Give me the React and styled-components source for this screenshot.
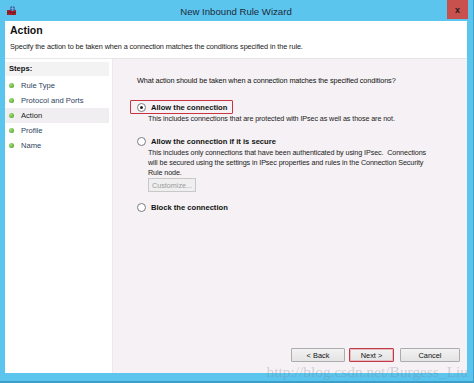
import React from "react";
import styled, { createGlobalStyle } from "styled-components";

const Global = createGlobalStyle`
  html, body { margin: 0; padding: 0; }
  body { font-family: Tahoma, "Liberation Sans", Arial, sans-serif; }
`;

const Window = styled.div`
  position: relative;
  width: 474px;
  height: 383px;
  box-sizing: border-box;
  background: #5cc5ee;
  padding: 0 6px 8px 5px;
  display: flex;
  flex-direction: column;
  border-right: 1px solid #3b9fc9;
  border-bottom: 2px solid #3b9fc9;
  overflow: hidden;
`;

const TitleBar = styled.div`
  height: 21px;
  display: flex;
  align-items: center;
  position: relative;
`;

const Title = styled.div`
  flex: 1;
  text-align: center;
  font-family: "Liberation Sans", Arial, sans-serif;
  font-size: 9.6px;
  color: #1d2a3a;
  padding: 1px 12px 0 0;
`;

const AppIcon = styled.svg`
  width: 11px;
  height: 11px;
  margin-left: 1px;
`;

const CloseBtn = styled.div`
  position: absolute;
  right: -1px;
  top: 0;
  width: 21px;
  height: 19px;
  background: #c9514d;
  display: flex;
  align-items: center;
  justify-content: center;
  font-family: "Liberation Sans", Arial, sans-serif;
  font-weight: bold;
  font-size: 9px;
  color: #2a1a1a;
`;

const Body = styled.div`
  flex: 1;
  display: flex;
  flex-direction: column;
  background: #ffffff;
`;

const Header = styled.div`
  height: 38px;
  box-sizing: border-box;
  padding: 2px 0 0 5px;
  border-bottom: 1px solid #e6e6e6;
`;

const HeaderTitle = styled.div`
  font-family: "Liberation Sans", Arial, sans-serif;
  font-weight: bold;
  font-size: 10.5px;
  color: #111;
  line-height: 14px;
`;

const HeaderSub = styled.div`
  font-family: "Liberation Sans", Arial, sans-serif;
  font-size: 7.3px;
  color: #222;
  margin-top: 5px;
  letter-spacing: -0.1px;
`;

const Main = styled.div`
  flex: 1;
  display: flex;
`;

const Sidebar = styled.div`
  width: 107px;
  background: #fff;
  padding-top: 3px;
  border-right: 1px solid #ece8eb;
`;

const StepsHeader = styled.div`
  height: 14px;
  margin-right: 3px;
  background: #f3f3f3;
  padding-left: 4px;
  font-family: "Liberation Sans", Arial, sans-serif;
  font-weight: bold;
  font-size: 7.6px;
  line-height: 14px;
  color: #111;
`;

const StepList = styled.div`
  display: flex;
  flex-direction: column;
  margin-top: 2px;
`;

const Step = styled.div`
  height: 15px;
  display: flex;
  align-items: center;
  gap: 7px;
  padding-left: 4px;
  margin-right: 3px;
  background: ${(p) => (p.$active ? "#f1eef1" : "transparent")};
  font-family: "Liberation Sans", Arial, sans-serif;
  font-size: 7.6px;
  color: ${(p) => (p.$active ? "#1a1a1a" : "#2c3f5c")};
`;

const Dot = styled.span`
  width: 5px;
  height: 5px;
  border-radius: 50%;
  background: radial-gradient(circle at 35% 35%, #a8e07a, #3f9a1e);
  flex: none;
`;

const Content = styled.div`
  flex: 1;
  background: #f5f1f4;
  display: flex;
  flex-direction: column;
  padding: 17px 0 0 24px;
  font-family: "Liberation Sans", Arial, sans-serif;
  color: #111;
`;

const Question = styled.div`
  font-size: 7.3px;
  letter-spacing: -0.1px;
  margin-bottom: 15px;
`;

const Option = styled.div`
  display: flex;
  flex-direction: column;
  margin-bottom: ${(p) => p.$mb}px;
`;

const OptionLabel = styled.div`
  display: inline-flex;
  align-items: center;
  align-self: flex-start;
  gap: 5px;
  height: 12px;
  padding: 0 5px 0 6px;
  margin-left: -7px;
  border: 1px solid ${(p) => (p.$focus ? "#c8343f" : "transparent")};
  border-radius: 1px;
  font-weight: bold;
  font-size: 7.6px;
`;

const Radio = styled.span`
  width: 7px;
  height: 7px;
  border-radius: 50%;
  border: 1px solid #7c7c7c;
  background: #fff;
  display: flex;
  align-items: center;
  justify-content: center;
  &::after {
    content: "";
    width: 3px;
    height: 3px;
    border-radius: 50%;
    background: ${(p) => (p.$checked ? "#222" : "transparent")};
  }
`;

const Desc = styled.div`
  font-size: 7.2px;
  line-height: 10px;
  letter-spacing: -0.1px;
  margin: 0 0 0 11px;
  width: 280px;
  color: #222;
`;

const SmallBtn = styled.div`
  width: 46px;
  height: 12px;
  margin: 0 0 0 11px;
  border: 1px solid #c8c8c8;
  background: #efefef;
  color: #9a9a9a;
  font-size: 7.2px;
  display: flex;
  align-items: center;
  justify-content: center;
`;

const Footer = styled.div`
  margin-top: auto;
  display: flex;
  justify-content: flex-end;
  align-items: center;
  padding: 0 7px 11px 0;
`;

const Button = styled.div`
  width: ${(p) => p.$w}px;
  height: 14px;
  box-sizing: border-box;
  border: 1px solid ${(p) => (p.$primary ? "#c23a48" : "#acacac")};
  box-shadow: ${(p) => (p.$primary ? "inset 0 0 0 1px #e7b9c0" : "none")};
  background: linear-gradient(#f2f2f2, #e4e4e4);
  border-radius: 1px;
  font-size: 7.4px;
  color: #111;
  display: flex;
  align-items: center;
  justify-content: center;
  margin-left: ${(p) => p.$gap || 0}px;
`;

const Watermark = styled.div`
  position: absolute;
  right: 5px;
  bottom: 0px;
  font-family: "Liberation Serif", "Times New Roman", serif;
  font-size: 15.4px;
  line-height: 18px;
  color: rgba(120, 120, 135, 0.3);
`;

export default function App() {
  return (
    <>
      <Global />
      <Window>
        <TitleBar>
          <AppIcon viewBox="0 0 11 11">
            <rect x="1" y="5" width="9" height="5" fill="#a2222a" />
            <path d="M1 7.5h9M4 5v2.5M7 7.5V10" stroke="#6a1014" strokeWidth="0.6" />
            <circle cx="6.5" cy="3.5" r="2.6" fill="#3a6fb0" />
            <path d="M4.5 3.5h4M6.5 1v5" stroke="#9fd0f0" strokeWidth="0.5" />
          </AppIcon>
          <Title>New Inbound Rule Wizard</Title>
          <CloseBtn>x</CloseBtn>
        </TitleBar>
        <Body>
          <Header>
            <HeaderTitle>Action</HeaderTitle>
            <HeaderSub>
              Specify the action to be taken when a connection matches the conditions specified in the rule.
            </HeaderSub>
          </Header>
          <Main>
            <Sidebar>
              <StepsHeader>Steps:</StepsHeader>
              <StepList>
                {["Rule Type", "Protocol and Ports", "Action", "Profile", "Name"].map((s) => (
                  <Step key={s} $active={s === "Action"}>
                    <Dot />
                    {s}
                  </Step>
                ))}
              </StepList>
            </Sidebar>
            <Content>
              <Question>What action should be taken when a connection matches the specified conditions?</Question>
              <Option $mb={10}>
                <OptionLabel $focus>
                  <Radio $checked />
                  Allow the connection
                </OptionLabel>
                <Desc>This includes connections that are protected with IPsec as well as those are not.</Desc>
              </Option>
              <Option $mb={8}>
                <OptionLabel>
                  <Radio />
                  Allow the connection if it is secure
                </OptionLabel>
                <Desc>
                  This includes only connections that have been authenticated by using IPsec.&nbsp; Connections
                  will be secured using the settings in IPsec properties and rules in the Connection Security
                  Rule node.
                </Desc>
                <SmallBtn>Customize...</SmallBtn>
              </Option>
              <Option $mb={0}>
                <OptionLabel>
                  <Radio />
                  Block the connection
                </OptionLabel>
              </Option>
              <Footer>
                <Button $w={54}>&lt; Back</Button>
                <Button $w={45} $primary $gap={4}>Next &gt;</Button>
                <Button $w={60} $gap={6}>Cancel</Button>
              </Footer>
            </Content>
          </Main>
        </Body>
        <Watermark>http://blog.csdn.net/Burgess_Liu</Watermark>
      </Window>
    </>
  );
}
